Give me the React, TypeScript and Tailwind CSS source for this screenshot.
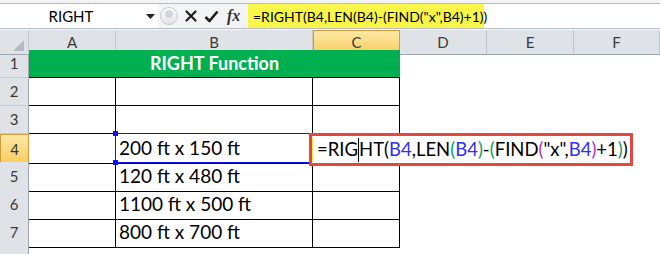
const GRID = "grid grid-cols-[29px_87px_197px_87px_87px_87px_86px]";
const FONT = "font-['Lato','Open_Sans',sans-serif]";

const rows: { n: number; b?: string }[] = [
  { n: 2 },
  { n: 3 },
  { n: 4, b: "200 ft x 150 ft" },
  { n: 5, b: "120 ft x 480 ft" },
  { n: 6, b: "1100 ft x 500 ft" },
  { n: 7, b: "800 ft x 700 ft" },
];

const BLUE = "text-[#2f2ff5]";
const GREEN = "text-[#0b9a63]";
const PURPLE = "text-[#b02cc8]";

function RowHead({ n, active }: { n: number; active?: boolean }) {
  return (
    <div
      className={
        active
          ? "flex items-center justify-center border border-[#d49a3c] bg-gradient-to-b from-[#fde9a4] to-[#f8cd5c] text-[15px] text-[#333]"
          : "flex items-center justify-center border-r border-b border-r-[#9ea5ae] border-b-[#c7ccd3] bg-[#dfe2e6] text-[15px] text-[#3a3a3a]"
      }
    >
      {n}
    </div>
  );
}

function FormulaBar() {
  return (
    <div className="flex h-[26px] border-y border-[#b7bdc6] bg-[#f3f4f6]">
      <div className="flex w-[158px] items-center bg-white">
        <div className="w-[142px] text-center text-[15px] text-black">RIGHT</div>
        <svg width="9" height="5" viewBox="0 0 9 5" className="ml-[4px]">
          <path d="M0 0h9L4.5 5z" fill="#222" />
        </svg>
      </div>
      <div className="flex w-[90px] items-center">
        <svg width="18" height="22" viewBox="0 0 18 22" className="ml-[2px]">
          <defs>
            <linearGradient id="g" x1="0" y1="0" x2="0" y2="1">
              <stop offset="0" stopColor="#ffffff" />
              <stop offset="1" stopColor="#dfe2e6" />
            </linearGradient>
          </defs>
          <circle cx="9" cy="11" r="8.5" fill="url(#g)" stroke="#c4c8ce" />
          <circle cx="9" cy="9" r="3.5" fill="#d3d6da" stroke="#c0c4ca" strokeWidth="0.6" />
        </svg>
        <svg width="12" height="12" viewBox="0 0 12 12" className="ml-[7px]">
          <path d="M1.5 1.5l9 9M10.5 1.5l-9 9" stroke="#1e1e1e" strokeWidth="2.2" strokeLinecap="round" />
        </svg>
        <svg width="15" height="13" viewBox="0 0 15 13" className="ml-[7px]">
          <path d="M1.5 7l4 4L13.5 1.5" fill="none" stroke="#1e1e1e" strokeWidth="2.6" strokeLinejoin="round" />
        </svg>
        <span className="ml-[8px] font-['Liberation_Serif',serif] text-[16px] font-bold italic leading-none text-[#333]">
          fx
        </span>
      </div>
      <div className="flex flex-1 bg-white">
        <div className="flex h-full w-[236px] items-center whitespace-nowrap bg-[#f8f64a] pl-[5px] text-[14px] text-black">
          =RIGHT(B4,LEN(B4)-(FIND("x",B4)+1))
        </div>
      </div>
    </div>
  );
}

function EditBox() {
  return (
    <div className="absolute -left-[4px] -top-[1px] z-10 flex h-[33px] w-[324px] items-center border-[3px] border-[#e4483d] bg-white">
      <div className="h-[24px] w-[1px] bg-[#f0e040]" />
      <div className="ml-[4px] flex items-center text-[18.5px] leading-none whitespace-nowrap text-black">
        <span>=RIG</span>
        <span className="h-[24px] w-[1px] bg-black" />
        <span>HT(</span>
        <span className={BLUE}>B4</span>
        <span>,LEN</span>
        <span className={GREEN}>(</span>
        <span className={BLUE}>B4</span>
        <span className={GREEN}>)</span>
        <span>-</span>
        <span className={GREEN}>(</span>
        <span>FIND</span>
        <span className={PURPLE}>(</span>
        <span>"x",</span>
        <span className={BLUE}>B4</span>
        <span className={PURPLE}>)</span>
        <span>+1</span>
        <span className={GREEN}>)</span>
        <span>)</span>
      </div>
    </div>
  );
}

export default function App() {
  return (
    <div className={`h-[254px] w-[660px] overflow-hidden bg-white ${FONT}`}>
      <div className="h-[3px] bg-[#f2f3f5]" />
      <FormulaBar />
      <div className="h-[1px] bg-[#f6f7f8]" />

      <div className={`${GRID} h-[20px] text-[15px] text-[#3a3a3a]`}>
        <div className="relative border-r border-b border-r-[#c2c7ce] border-b-[#9ea5ae] bg-[#dfe2e6]">
          <svg width="11" height="11" viewBox="0 0 11 11" className="absolute right-[4px] bottom-[3px]">
            <path d="M11 0v11H0z" fill="#b5bac1" />
          </svg>
        </div>
        {["A", "B", "C", "D", "E", "F"].map((c) =>
          c === "C" ? (
            <div
              key={c}
              className="flex items-center justify-center border border-[#d49a3c] bg-gradient-to-b from-[#fde9a4] to-[#f8cd5c]"
            >
              {c}
            </div>
          ) : (
            <div
              key={c}
              className="flex items-center justify-center border-r border-b border-r-[#c2c7ce] border-b-[#9ea5ae] bg-[#dfe2e6]"
            >
              {c}
            </div>
          )
        )}
      </div>

      <div className={`${GRID} h-[28px]`}>
        <RowHead n={1} />
        <div className="col-span-3 flex items-center justify-center border-b border-black bg-[#00b050] text-[18px] font-bold text-white">
          RIGHT Function
        </div>
        <div className="col-span-3" />
      </div>

      {rows.map((r) => (
        <div key={r.n} className={`${GRID} h-[28px]`}>
          <RowHead n={r.n} active={r.n === 4} />
          <div className="border-r border-b border-black" />
          <div className="relative flex items-center border-r border-b border-black pl-[3px] text-[19px] text-black">
            {r.b}
            {r.n === 4 && (
              <div className="absolute -top-[1px] -left-[1px] right-0 bottom-0 border border-[#1010f0]">
                <div className="absolute -top-[3px] -left-[3px] h-[5px] w-[5px] bg-[#1010f0]" />
                <div className="absolute -bottom-[3px] -left-[3px] h-[5px] w-[5px] bg-[#1010f0]" />
              </div>
            )}
          </div>
          <div className="relative border-r border-b border-black">{r.n === 4 && <EditBox />}</div>
          <div className="col-span-3" />
        </div>
      ))}

      <div className={`${GRID} h-[8px]`}>
        <div className="border-r border-r-[#9ea5ae] bg-[#dfe2e6]" />
      </div>
    </div>
  );
}
